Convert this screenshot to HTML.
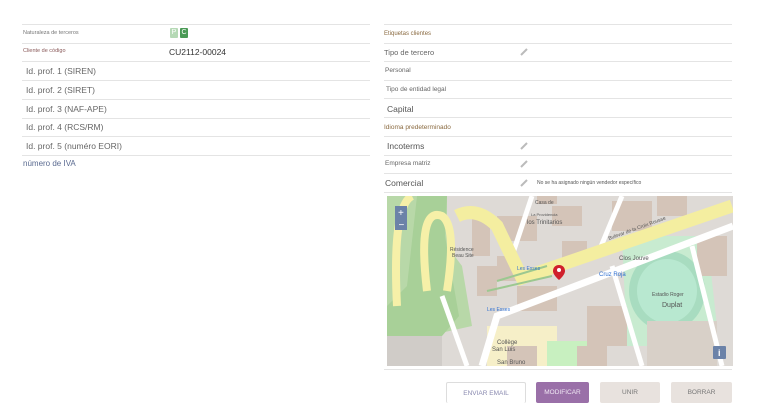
<!DOCTYPE html>
<html><head><meta charset="utf-8"><style>
*{margin:0;padding:0;box-sizing:border-box}
body{width:768px;height:418px;background:#fff;font-family:"Liberation Sans",sans-serif;position:relative;overflow:hidden;color:#444}
.l{position:absolute;height:1px;background:#e4e4e4}
.t{position:absolute;white-space:nowrap}
.m{font-size:8.5px;color:#666}
.pen{position:absolute;width:10px;height:10px}
.btn{position:absolute;top:382px;height:21px;font-size:6.5px;text-align:center;line-height:21px;border-radius:2px}
</style></head><body>
<div class="l" style="left:22px;top:24px;width:348px"></div>
<div class="l" style="left:22px;top:43px;width:348px"></div>
<div class="l" style="left:22px;top:61px;width:348px"></div>
<div class="l" style="left:22px;top:80px;width:348px"></div>
<div class="l" style="left:22px;top:99px;width:348px"></div>
<div class="l" style="left:22px;top:118px;width:348px"></div>
<div class="l" style="left:22px;top:136px;width:348px"></div>
<div class="l" style="left:22px;top:155px;width:348px"></div>
<div class="t" style="left:23px;top:30px;font-size:5.5px;color:#777">Naturaleza de terceros</div>
<div style="position:absolute;left:170px;top:28px;width:8px;height:10px;background:#b5d9b5;color:#fff;font-size:7px;text-align:center;line-height:10px;border-radius:1px">P</div>
<div style="position:absolute;left:180px;top:28px;width:8px;height:10px;background:#4a9a55;color:#fff;font-size:7px;text-align:center;line-height:10px;border-radius:1px">C</div>
<div class="t" style="left:23px;top:48px;font-size:5.5px;color:#8a5a5a">Cliente de código</div>
<div class="t" style="left:169px;top:47px;font-size:8.5px;color:#333">CU2112-00024</div>
<div class="t m" style="left:26px;top:66px">Id. prof. 1 (SIREN)</div>
<div class="t m" style="left:26px;top:85px">Id. prof. 2 (SIRET)</div>
<div class="t m" style="left:26px;top:104px">Id. prof. 3 (NAF-APE)</div>
<div class="t m" style="left:26px;top:122px">Id. prof. 4 (RCS/RM)</div>
<div class="t m" style="left:26px;top:141px">Id. prof. 5 (numéro EORI)</div>
<div class="t" style="left:23px;top:159px;font-size:8px;color:#5a6a90">número de IVA</div>
<div class="l" style="left:384px;top:24px;width:348px"></div>
<div class="l" style="left:384px;top:43px;width:348px"></div>
<div class="l" style="left:384px;top:61px;width:348px"></div>
<div class="l" style="left:384px;top:80px;width:348px"></div>
<div class="l" style="left:384px;top:98px;width:348px"></div>
<div class="l" style="left:384px;top:117px;width:348px"></div>
<div class="l" style="left:384px;top:136px;width:348px"></div>
<div class="l" style="left:384px;top:155px;width:348px"></div>
<div class="l" style="left:384px;top:173px;width:348px"></div>
<div class="l" style="left:384px;top:192px;width:348px"></div>
<div class="t" style="left:384px;top:31px;font-size:6px;color:#8a6a40">Etiquetas clientes</div>
<div class="t" style="left:384px;top:48px;font-size:7.5px;color:#666">Tipo de tercero</div>
<div class="t" style="left:385px;top:67px;font-size:6.5px;color:#666">Personal</div>
<div class="t" style="left:386px;top:86px;font-size:6.5px;color:#666">Tipo de entidad legal</div>
<div class="t" style="left:387px;top:104px;font-size:8.5px;color:#555">Capital</div>
<div class="t" style="left:384px;top:124px;font-size:6.5px;color:#8a6a40">Idioma predeterminado</div>
<div class="t" style="left:387px;top:141px;font-size:8.5px;color:#555">Incoterms</div>
<div class="t" style="left:385px;top:160px;font-size:6.5px;color:#666">Empresa matriz</div>
<div class="t" style="left:385px;top:178px;font-size:8.5px;color:#555">Comercial</div>
<div class="t" style="left:537px;top:180px;font-size:5px;color:#555">No se ha asignado ningún vendedor específico</div>
<svg class="pen" style="left:519px;top:47px" viewBox="0 0 10 10"><path d="M2 8 L8 2" stroke="#bbb" stroke-width="2"/></svg>
<svg class="pen" style="left:519px;top:141px" viewBox="0 0 10 10"><path d="M2 8 L8 2" stroke="#bbb" stroke-width="2"/></svg>
<svg class="pen" style="left:519px;top:159px" viewBox="0 0 10 10"><path d="M2 8 L8 2" stroke="#bbb" stroke-width="2"/></svg>
<svg class="pen" style="left:519px;top:178px" viewBox="0 0 10 10"><path d="M2 8 L8 2" stroke="#bbb" stroke-width="2"/></svg>
<svg style="position:absolute;left:387px;top:196px" width="346" height="170" viewBox="0 0 346 170">
<rect width="346" height="170" fill="#dedad6"/>
<path d="M0 0 H60 V50 L75 70 L85 130 L40 140 L0 140Z" fill="#b8d8a8"/>
<path d="M30 0 H60 L58 40 L72 120 L55 140 H0 V110 L20 90 Z" fill="#a8d098"/>
<rect x="0" y="140" width="55" height="30" fill="#d0ccc8"/>
<path d="M100 130 H170 V170 H100Z" fill="#f6efc8"/>
<path d="M160 145 H215 V170 H160Z" fill="#c8f0c0"/>
<path d="M235 40 L320 40 L330 130 L300 150 L240 150 Z" fill="#c8ebd0"/>
<ellipse cx="280" cy="95" rx="38" ry="40" fill="#a8dcc0"/>
<ellipse cx="280" cy="95" rx="30" ry="32" fill="#b8e8d0"/>
<rect x="260" y="125" width="70" height="45" fill="#d8d0c8"/>
<g fill="#d4c4b8">
<rect x="110" y="20" width="40" height="25"/><rect x="165" y="10" width="30" height="20"/>
<rect x="225" y="5" width="40" height="30"/><rect x="130" y="90" width="40" height="25"/>
<rect x="200" y="110" width="40" height="40"/><rect x="110" y="60" width="20" height="25"/>
<rect x="310" y="40" width="30" height="40"/><rect x="120" y="150" width="30" height="20"/>
<rect x="190" y="150" width="30" height="20"/><rect x="85" y="20" width="18" height="40"/>
<rect x="270" y="0" width="30" height="20"/><rect x="175" y="45" width="25" height="18"/>
<rect x="90" y="70" width="20" height="30"/><rect x="150" y="0" width="20" height="8"/></g>
<path d="M95 170 L110 120 L346 30" stroke="#fff" stroke-width="7" fill="none"/>
<path d="M145 0 L125 60" stroke="#fff" stroke-width="5"/>
<path d="M235 0 L210 60" stroke="#fff" stroke-width="5"/>
<path d="M305 50 L335 170" stroke="#fff" stroke-width="5"/>
<path d="M225 70 L255 170" stroke="#fff" stroke-width="5"/>
<path d="M55 100 L80 170" stroke="#fff" stroke-width="5"/>
<path d="M10 110 Q5 10 25 0 M40 95 Q30 10 55 20 Q70 30 60 95" stroke="#f6f0a8" stroke-width="8" fill="none"/>
<path d="M70 20 Q90 10 110 30 L135 82 L345 10" stroke="#f4eea0" stroke-width="13" fill="none"/>
<path d="M110 85 L160 70 M100 95 L165 80" stroke="#9cc890" stroke-width="2"/>
<path d="M137 29 c-4 0 -6 3 -6 6 c0 4 6 9 6 9 c0 0 6 -5 6 -9 c0 -3 -2 -6 -6 -6z" transform="translate(35 40)" fill="#d0202c"/>
<circle cx="172" cy="74" r="2" fill="#fff"/>
<g font-family="Liberation Sans" font-size="5" fill="#555">
<text x="148" y="8">Casa de</text><text x="144" y="20" font-size="4">La Providencia</text><text x="140" y="28" font-size="6">los Trinitarios</text>
<text x="63" y="55">Résidence</text><text x="65" y="61">Beau Site</text>
<text x="232" y="64" font-size="6">Clos Jouve</text>
<text x="265" y="100">Estadio Roger</text><text x="275" y="111" font-size="7">Duplat</text>
<text x="110" y="148" font-size="6">Collège</text><text x="105" y="155" font-size="6">San Luis</text><text x="110" y="168" font-size="6">San Bruno</text>
<text x="212" y="80" font-size="6" fill="#3070d0">Cruz Roja</text>
<text x="130" y="74" fill="#3070d0">Les Esses</text><text x="100" y="115" fill="#3070d0">Les Esses</text>
<text x="222" y="44" transform="rotate(-20 222 44)">Bulevar de la Croix Rousse</text>
</g>
<rect x="8" y="10" width="12" height="12" fill="#6b82a8"/><rect x="8" y="22" width="12" height="12" fill="#6b82a8"/>
<text x="11" y="20" font-size="10" fill="#fff" font-family="Liberation Sans">+</text>
<text x="11.5" y="32" font-size="10" fill="#fff" font-family="Liberation Sans">−</text>
<rect x="326" y="150" width="13" height="13" fill="#6b82a8" rx="1"/>
<text x="331" y="160" font-size="9" fill="#fff" font-family="Liberation Sans" font-weight="bold">i</text>
</svg>
<div class="l" style="left:384px;top:369px;width:348px"></div>
<div class="btn" style="left:446px;width:80px;border:1px solid #ddd;border-bottom:none;color:#8a8ab0;background:#fff">ENVIAR EMAIL</div>
<div class="btn" style="left:536px;width:53px;background:#9a70a8;color:#f0e8f4">MODIFICAR</div>
<div class="btn" style="left:600px;width:60px;background:#e8e2de;color:#777">UNIR</div>
<div class="btn" style="left:671px;width:61px;background:#e8e2de;color:#777">BORRAR</div>
</body></html>
